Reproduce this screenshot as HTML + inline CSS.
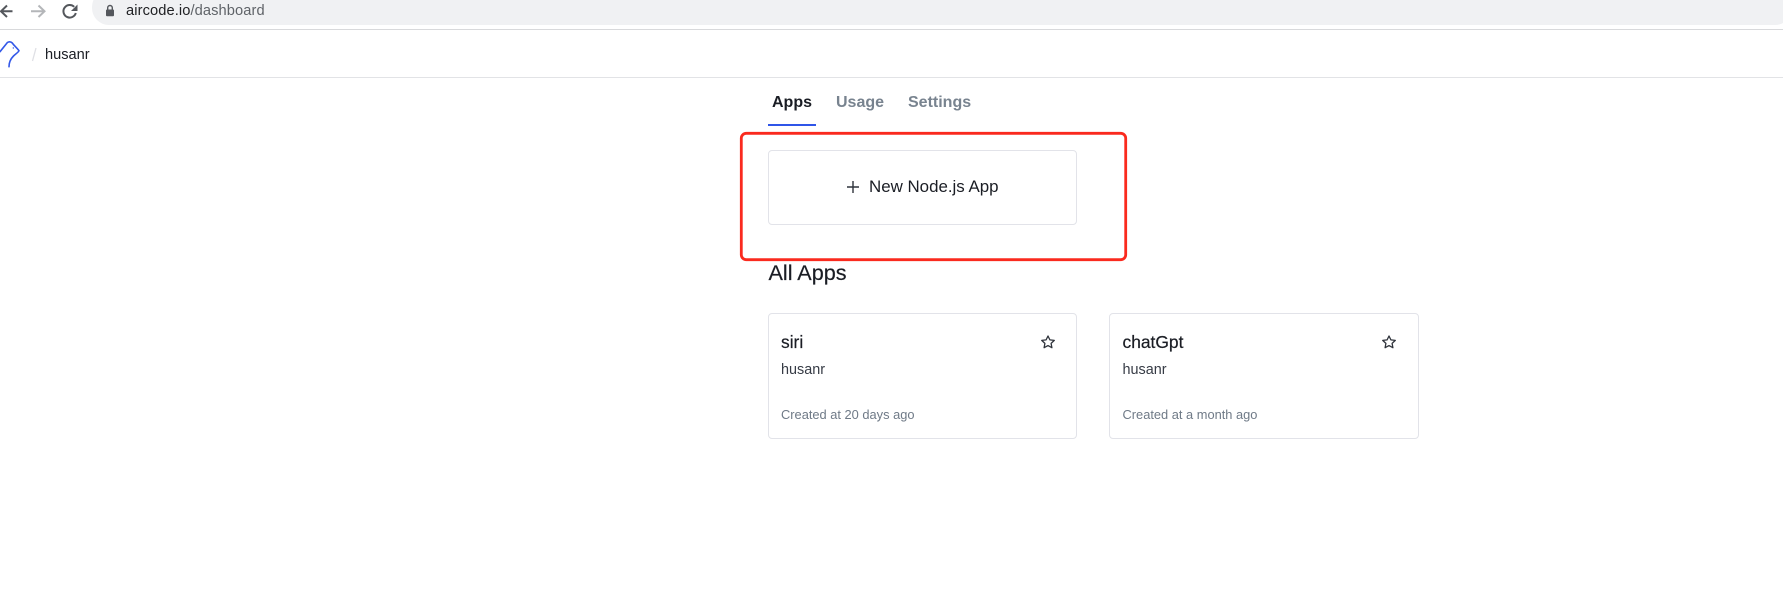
<!DOCTYPE html>
<html>
<head>
<meta charset="utf-8">
<style>
html,body{margin:0;padding:0;background:#fff;}
body{position:relative;width:1783px;height:616px;overflow:hidden;font-family:"Liberation Sans",sans-serif;color:#1a1d24;}
#w{position:absolute;left:0;top:0;width:1783px;height:616px;background:#fff;overflow:hidden;filter:blur(.3px);}
.a{position:absolute;white-space:nowrap;line-height:1;}
.m{-webkit-text-stroke:.2px currentColor;}
.box{position:absolute;box-sizing:border-box;background:#fff;border:1px solid #e2e3e9;border-radius:4px;}
svg{position:absolute;overflow:visible;}
</style>
</head>
<body>
<div id="w">
<!-- browser bar -->
<svg style="left:0;top:0" width="90" height="26" viewBox="0 0 90 26" fill="none">
<path d="M12.5 11.3H1M7 5.5L1 11.3L7 17" stroke="#54575c" stroke-width="2"/>
<path d="M31 11.3H44M38.5 5.5L44.5 11.3L38.5 17" stroke="#b4b6b9" stroke-width="2"/>
<path d="M75.8 13a6.3 6.3 0 1 1-1.6-6.2" stroke="#54575c" stroke-width="2"/>
<path d="M77.5 4.5v6.5H71z" fill="#54575c"/>
</svg>
<div style="position:absolute;left:92px;top:-10px;width:1700px;height:35px;background:#f0f1f3;border-radius:17px;"></div>
<svg style="left:105px;top:4px" width="10" height="13" viewBox="0 0 10 13" fill="none">
<path d="M2.7 6V3.8a2.3 2.3 0 0 1 4.6 0V6" stroke="#54575c" stroke-width="1.4"/>
<rect x="1" y="5.5" width="8" height="6.7" rx="1" fill="#54575c"/>
</svg>
<div class="a" style="left:126px;top:3px;font-size:14.65px;line-height:17px;letter-spacing:.1px;color:#202124;">aircode.io<span style="color:#5f6368">/dashboard</span></div>
<div style="position:absolute;left:0;top:29px;width:1783px;height:1px;background:#d8d9db;"></div>

<!-- app header -->
<svg style="left:0;top:40px" width="22" height="30" viewBox="0 0 22 30" fill="none">
<path d="M0 11.7L7.3 2.6C9 1.6 11 1.8 12.3 3C14 5.5 17 8 19 10.7C18 12.7 15.5 14 13.5 16C11 18.5 9 22 9 26.7" stroke="#3358e8" stroke-width="1.6" stroke-linecap="round" stroke-linejoin="round"/>
<circle cx="13.3" cy="8" r=".7" fill="#3358e8"/>
</svg>
<svg style="left:31px;top:47px" width="6" height="15" viewBox="0 0 6 15" fill="none"><path d="M5 1L1.5 14" stroke="#dfe0e5" stroke-width="1.3"/></svg>
<div class="a" style="left:45px;top:46.5px;font-size:14.6px;line-height:17px;color:#1a1d24;">husanr</div>
<div style="position:absolute;left:0;top:77px;width:1783px;height:1px;background:#e2e3e6;"></div>

<!-- tabs -->
<div class="a" style="left:772px;top:94px;font-size:16px;line-height:18px;font-weight:700;color:#1a1d24;">Apps</div>
<div class="a" style="left:836px;top:94px;font-size:16px;line-height:18px;font-weight:700;color:#78838f;">Usage</div>
<div class="a" style="left:908px;top:94px;font-size:16px;line-height:18px;font-weight:700;color:#78838f;">Settings</div>
<div style="position:absolute;left:768px;top:124px;width:48px;height:2px;background:#2f55e8;"></div>

<!-- new app -->
<div class="box" style="left:768px;top:150px;width:309px;height:75px;"></div>
<svg style="left:846px;top:180px" width="14" height="14" viewBox="0 0 14 14" fill="none"><path d="M7 1V13M1 7H13" stroke="#2f333b" stroke-width="1.4"/></svg>
<div class="a" style="left:869px;top:177px;font-size:16.9px;line-height:19px;">New Node.js App</div>

<!-- red annotation -->
<svg style="left:0;top:0" width="1783" height="616" viewBox="0 0 1783 616" fill="none"><rect x="741.3" y="133.3" width="384.4" height="126.4" rx="5" stroke="#fa2a1e" stroke-width="2.8"/></svg>

<div class="a m" style="left:768.5px;top:260.5px;font-size:21.6px;line-height:24px;">All Apps</div>

<!-- cards -->
<div class="box" style="left:768px;top:313px;width:309px;height:125.5px;"></div>
<div class="a m" style="left:781px;top:333px;font-size:17.4px;line-height:19px;">siri</div>
<svg style="left:1040px;top:334px" width="16" height="16" viewBox="0 0 16 16" fill="none"><path d="M8 2L9.9 5.9L14.3 6.4L11.1 9.4L11.9 13.7L8 11.6L4.1 13.7L4.9 9.4L1.7 6.4L6.1 5.9Z" stroke="#2f333b" stroke-width="1.3" stroke-linejoin="round"/></svg>
<div class="a" style="left:781px;top:362px;font-size:14.4px;line-height:17px;color:#363b45;">husanr</div>
<div class="a" style="left:781px;top:407px;font-size:12.85px;line-height:15px;color:#6f7a87;">Created at 20 days ago</div>

<div class="box" style="left:1109px;top:313px;width:310px;height:125.5px;"></div>
<div class="a m" style="left:1122.5px;top:333px;font-size:17.4px;line-height:19px;">chatGpt</div>
<svg style="left:1381px;top:334px" width="16" height="16" viewBox="0 0 16 16" fill="none"><path d="M8 2L9.9 5.9L14.3 6.4L11.1 9.4L11.9 13.7L8 11.6L4.1 13.7L4.9 9.4L1.7 6.4L6.1 5.9Z" stroke="#2f333b" stroke-width="1.3" stroke-linejoin="round"/></svg>
<div class="a" style="left:1122.5px;top:362px;font-size:14.4px;line-height:17px;color:#363b45;">husanr</div>
<div class="a" style="left:1122.5px;top:407px;font-size:12.85px;line-height:15px;color:#6f7a87;">Created at a month ago</div>
</div>
</body>
</html>
